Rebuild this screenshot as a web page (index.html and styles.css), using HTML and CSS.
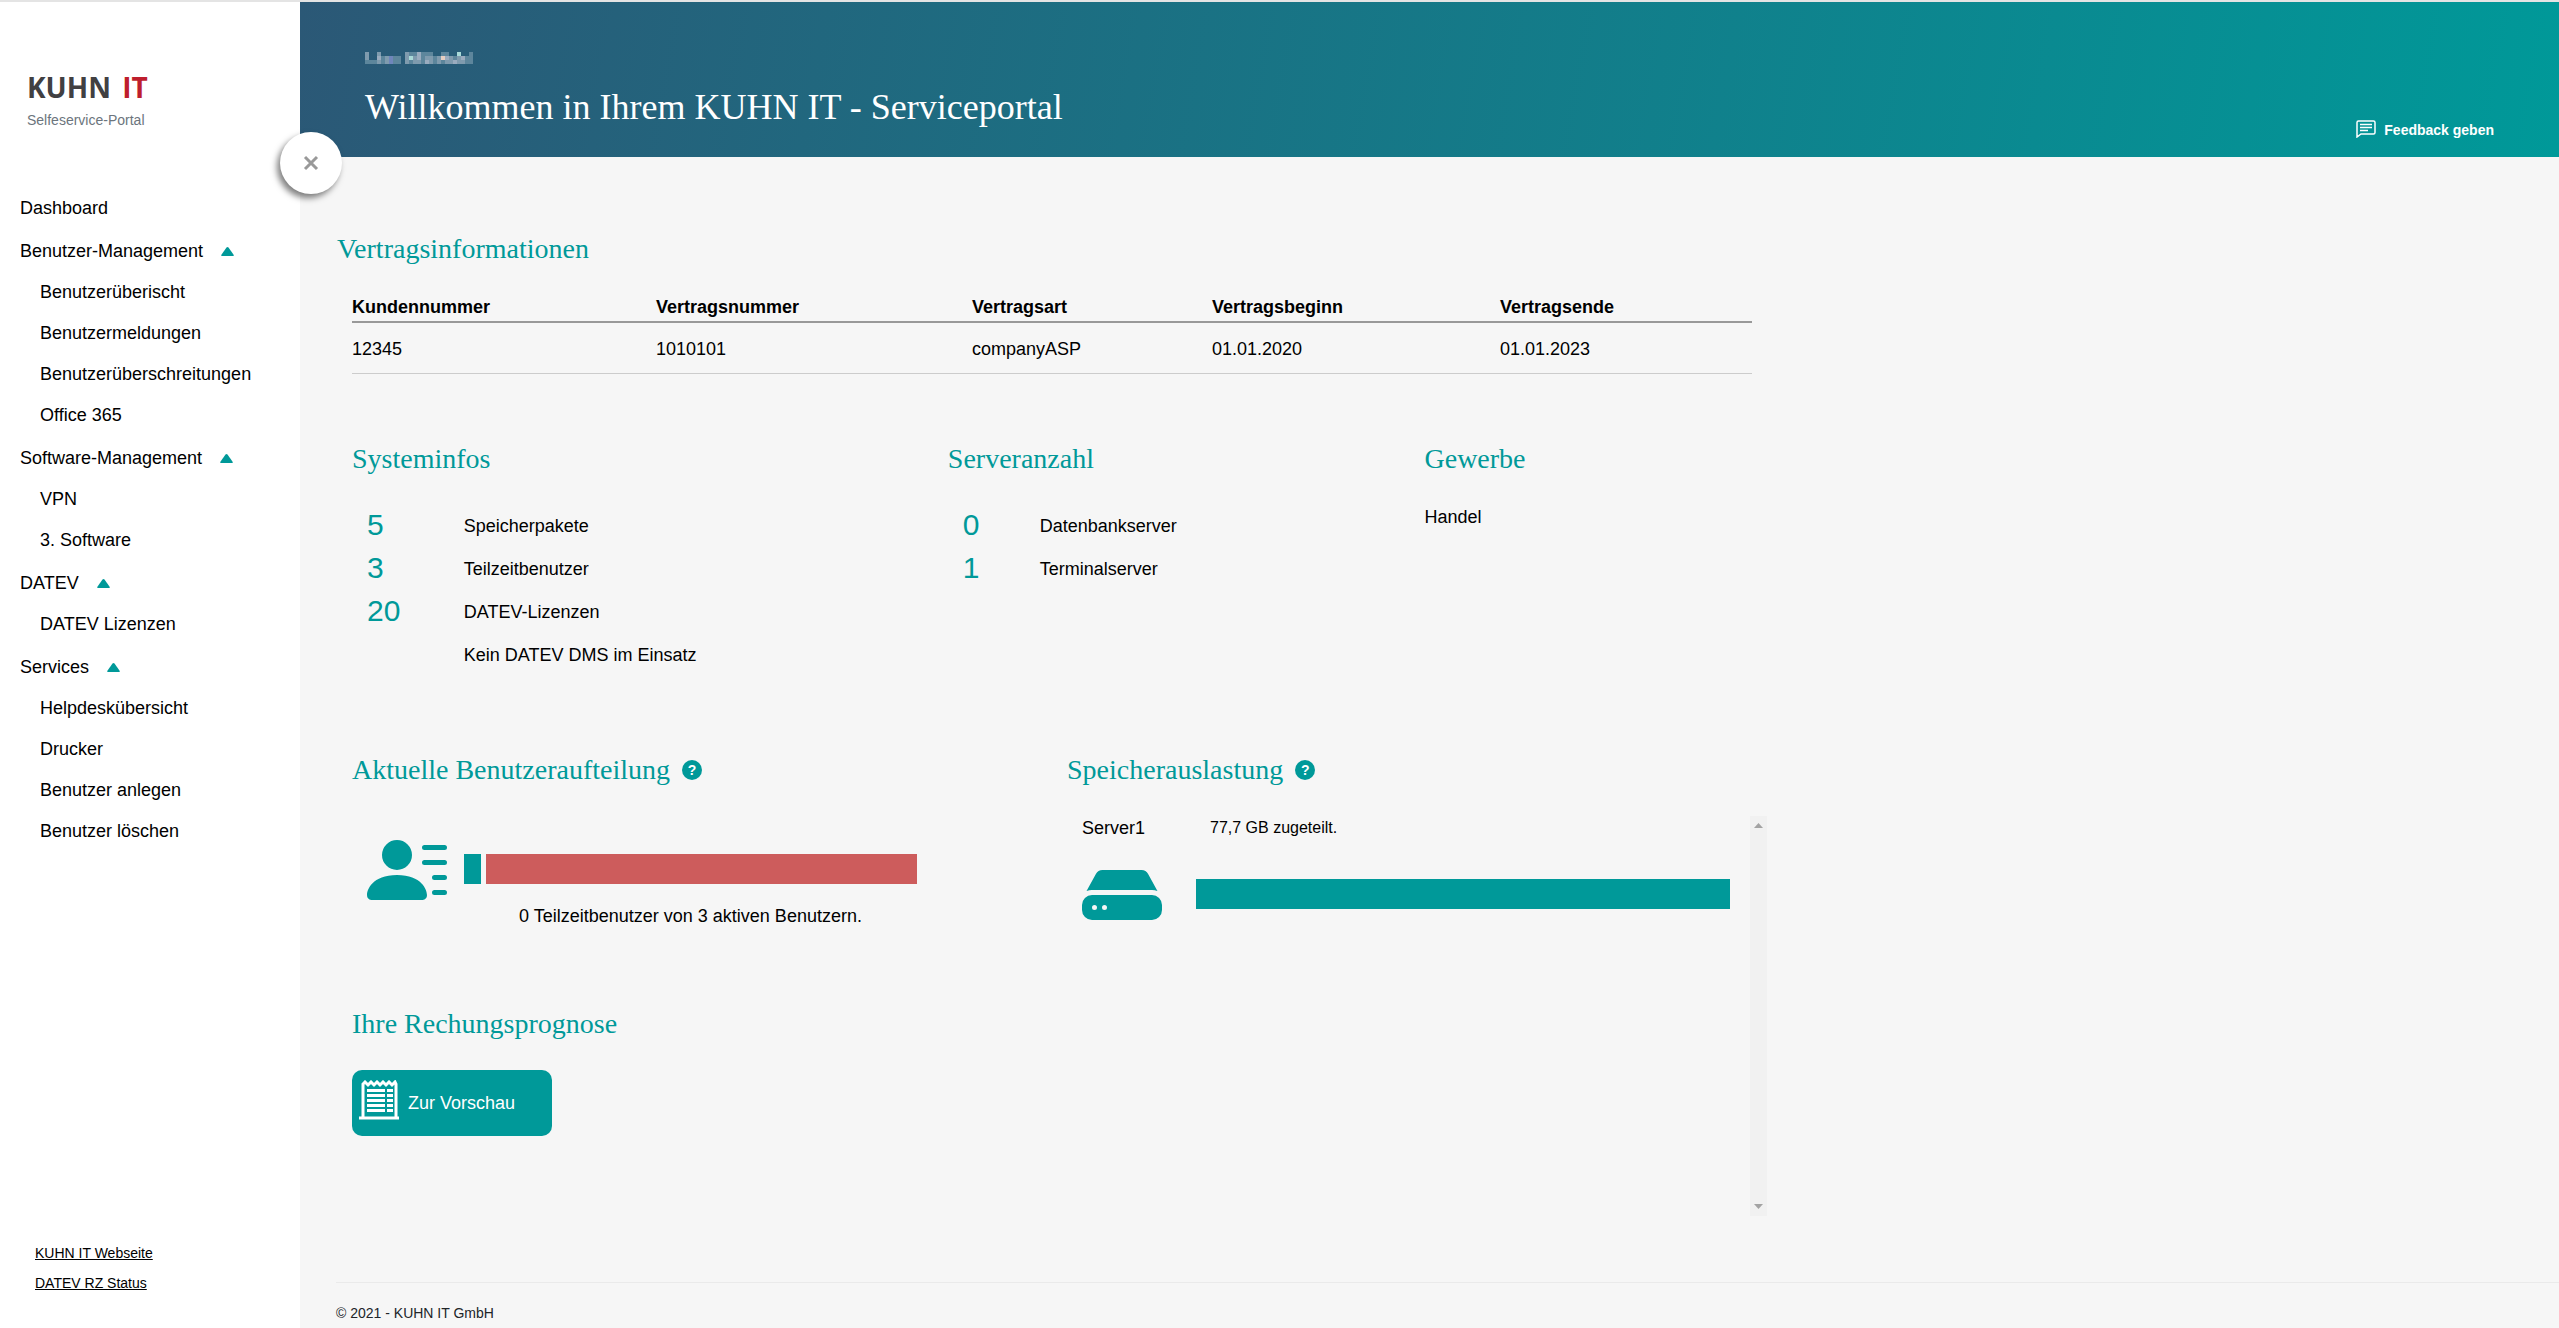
FILE: index.html
```
<!DOCTYPE html>
<html lang="de">
  <head>
    <meta charset="UTF-8" />
    <meta name="viewport" content="width=device-width, initial-scale=1.0" />
    <title>KUHN IT - Serviceportal</title>
    <link rel="stylesheet" href="styles.css">
  </head>
  <body>
    <!-- Seitenleiste -->
    <aside class="sidebar">
      <div class="brand">
        <div class="logo">KUHN <span class="logo-it">IT</span></div>
        <div class="brand-sub">Selfeservice-Portal</div>
      </div>

      <nav class="menu">
        <a class="menu-link" href="#">Dashboard</a>

        <button class="menu-group" type="button">
          Benutzer-Management
          <svg class="caret" viewBox="0 0 13 9"><path d="M1 9h11q1.400 0 .6-1.200L7.500.6q-1-1.200-2 0L.4 7.800Q-.4 9 1 9z" /></svg>
        </button>
        <a class="menu-link menu-sub" href="#">Benutzerüberischt</a>
        <a class="menu-link menu-sub" href="#">Benutzermeldungen</a>
        <a class="menu-link menu-sub" href="#">Benutzerüberschreitungen</a>
        <a class="menu-link menu-sub" href="#">Office 365</a>

        <button class="menu-group" type="button">
          Software-Management
          <svg class="caret" viewBox="0 0 13 9"><path d="M1 9h11q1.400 0 .6-1.200L7.500.6q-1-1.200-2 0L.4 7.800Q-.4 9 1 9z" /></svg>
        </button>
        <a class="menu-link menu-sub" href="#">VPN</a>
        <a class="menu-link menu-sub" href="#">3. Software</a>

        <button class="menu-group" type="button">
          DATEV
          <svg class="caret" viewBox="0 0 13 9"><path d="M1 9h11q1.400 0 .6-1.200L7.500.6q-1-1.200-2 0L.4 7.800Q-.4 9 1 9z" /></svg>
        </button>
        <a class="menu-link menu-sub" href="#">DATEV Lizenzen</a>

        <button class="menu-group" type="button">
          Services
          <svg class="caret" viewBox="0 0 13 9"><path d="M1 9h11q1.400 0 .6-1.200L7.500.6q-1-1.200-2 0L.4 7.800Q-.4 9 1 9z" /></svg>
        </button>
        <a class="menu-link menu-sub" href="#">Helpdeskübersicht</a>
        <a class="menu-link menu-sub" href="#">Drucker</a>
        <a class="menu-link menu-sub" href="#">Benutzer anlegen</a>
        <a class="menu-link menu-sub" href="#">Benutzer löschen</a>
      </nav>

      <div class="sidebar-links">
        <a href="#">KUHN IT Webseite</a>
        <a href="#">DATEV RZ Status</a>
      </div>

      <button class="sidebar-close" type="button" aria-label="Menü schließen">
        <svg width="16" height="16" viewBox="0 0 16 16"><path d="M2 2l12 12M14 2L2 14" /></svg>
      </button>
    </aside>

    <div class="page">
      <header class="header">
        <div>
          <svg class="user-name" viewBox="0 0 27 3" shape-rendering="crispEdges">
            <path fill="#5d869c" d="M0 0h1v3H0zM1 2h2v1H1zM3 0h1v3H3zM4 1h5v2H4zM10 0h7v3h-7zM17 1h10v2H17zM19 0h2v1h-2zM23 0h1v1h-1zM26 0h1v1h-1z" />
            <path fill="#7f9bae" d="M0 0h1v2H0zM3 0h1v3H3zM5 1h1v2H5zM10 0h1v3h-1zM12 1h2v2h-2zM15 1h2v2h-2zM18 1h1v2h-1zM20 1h2v2h-2zM23 1h2v2h-2z" />
            <path fill="#9aacbf" d="M3 1h1v1H3zM13 0h1v2h-1zM15 2h1v1h-1zM20 1h1v1h-1zM22 2h1v1h-1zM24 1h1v1h-1z" />
            <path fill="#6f86bb" d="M6 1h1v2H6z" />
            <path fill="#a9dad8" d="M11 1h1v1h-1zM23 0h1v1h-1z" />
            <path fill="#e6cfc2" d="M19 1h1v1h-1z" />
          </svg>
          <h1 class="title">Willkommen in Ihrem KUHN IT - Serviceportal</h1>
        </div>
        <a class="feedback" href="#">
          <svg width="20" height="18" viewBox="0 0 20 18"><path d="M1 17V2.500Q1 1 2.500 1h15Q19 1 19 2.500v10q0 1.500-1.500 1.500H5zM4 4.500h12M4 7.500h12M4 10.500h8" /></svg>
          Feedback geben
        </a>
      </header>

      <main class="content">
        <h2>Vertragsinformationen</h2>

        <div class="inner">
          <table class="contract">
            <thead>
              <tr>
                <th class="col-customer">Kundennummer</th>
                <th class="col-number">Vertragsnummer</th>
                <th class="col-type">Vertragsart</th>
                <th class="col-start">Vertragsbeginn</th>
                <th>Vertragsende</th>
              </tr>
            </thead>
            <tbody>
              <tr>
                <td>12345</td>
                <td>1010101</td>
                <td>companyASP</td>
                <td>01.01.2020</td>
                <td>01.01.2023</td>
              </tr>
            </tbody>
          </table>

          <div class="infos">
            <section>
              <h2>Systeminfos</h2>
              <ul class="counts">
                <li><span class="count">5</span><span>Speicherpakete</span></li>
                <li><span class="count">3</span><span>Teilzeitbenutzer</span></li>
                <li><span class="count">20</span><span>DATEV-Lizenzen</span></li>
                <li><span class="count"></span><span>Kein DATEV DMS im Einsatz</span></li>
              </ul>
            </section>
            <section>
              <h2>Serveranzahl</h2>
              <ul class="counts">
                <li><span class="count">0</span><span>Datenbankserver</span></li>
                <li><span class="count">1</span><span>Terminalserver</span></li>
              </ul>
            </section>
            <section>
              <h2>Gewerbe</h2>
              <p class="trade">Handel</p>
            </section>
          </div>

          <div class="usage">
            <div>
              <section>
                <h2>
                  Aktuelle Benutzeraufteilung
                  <button class="help" type="button" aria-label="Hilfe zur Benutzeraufteilung">?</button>
                </h2>
                <div class="users">
                  <svg class="icon" viewBox="0 0 16 16">
                    <path d="M6 8a3 3 0 1 0 0-6 3 3 0 0 0 0 6zm-5 6s-1 0-1-1 1-4 6-4 6 3 6 4-1 1-1 1H1zM11 3.500a.5.500 0 0 1 .5-.5h4a.5.500 0 0 1 0 1h-4a.5.500 0 0 1-.5-.5zm.5 2.500a.5.500 0 0 0 0 1h4a.5.500 0 0 0 0-1h-4zm2 3a.5.500 0 0 0 0 1h2a.5.500 0 0 0 0-1h-2zm0 3a.5.500 0 0 0 0 1h2a.5.500 0 0 0 0-1h-2z" />
                  </svg>
                  <div class="users-chart">
                    <div class="bars">
                      <div class="bar bar-part"></div>
                      <div class="bar bar-full"></div>
                    </div>
                    <p class="users-text">0 Teilzeitbenutzer von 3 aktiven Benutzern.</p>
                  </div>
                </div>
              </section>

              <section class="forecast">
                <h2>Ihre Rechungsprognose</h2>
                <button class="preview" type="button">
                  <svg width="40" height="46" viewBox="0 0 40 46">
                    <path class="line" d="M4 37V4l2-2 3 3 3-3 3 3 3-3 3 3 3-3 3 3 3-3 3 3 3-3 1 2v33" />
                    <path class="line" d="M0 38h40" />
                    <path class="line" d="M8 10.500h18M28 10.500h6M8 15.500h18M28 15.500h6M8 20.500h18M28 20.500h6M8 25.500h18M28 25.500h6M8 30.500h18M28 30.500h6" />
                  </svg>
                  Zur Vorschau
                </button>
              </section>
            </div>

            <section>
              <h2>
                Speicherauslastung
                <button class="help" type="button" aria-label="Hilfe zur Speicherauslastung">?</button>
              </h2>
              <div class="storage">
                <div class="server">
                  <p>Server1</p>
                  <svg class="icon" viewBox="0 0 16 16">
                    <path d="M0 10a2 2 0 0 1 2-2h12a2 2 0 0 1 2 2v1a2 2 0 0 1-2 2H2a2 2 0 0 1-2-2v-1zm2.500 1a.5.500 0 1 0 0-1 .5.500 0 0 0 0 1zm2 0a.5.500 0 1 0 0-1 .5.500 0 0 0 0 1zM.91 7.204A2.993 2.993 0 0 1 2 7h12c.384 0 .752.072 1.090.204l-1.867-3.422A1.500 1.500 0 0 0 11.906 3H4.094a1.500 1.500 0 0 0-1.317.782L.91 7.204z" />
                  </svg>
                </div>
                <div class="server-usage">
                  <p class="server-text">77,7 GB zugeteilt.</p>
                  <div class="bar bar-storage"></div>
                </div>
                <div class="scrollbar">
                  <svg width="9" height="5" viewBox="0 0 9 5"><path d="M0 5h9L4.500 0z" /></svg>
                  <svg width="9" height="5" viewBox="0 0 9 5"><path d="M0 0h9L4.500 5z" /></svg>
                </div>
              </div>
            </section>
          </div>
        </div>
      </main>

      <footer class="footer">&copy; 2021 - KUHN IT GmbH</footer>
    </div>
  </body>
</html>
```

FILE: styles.css
```
* {
  box-sizing: border-box;
}
body {
  display: flex;
  min-height: 100vh;
  margin: 0;
  border-top: 2px solid #e4e4e4;
  background: #f6f6f6;
  color: #000;
  font-family: "Liberation Sans", Arial, sans-serif;
  font-size: 18px;
  line-height: 24px;
}
h1,
h2,
p,
ul {
  margin: 0;
  padding: 0;
  font-weight: normal;
}
h2 {
  display: flex;
  align-items: center;
  gap: 12px;
  color: #009999;
  font-family: "Liberation Serif", "Times New Roman", serif;
  font-size: 28px;
  line-height: 32px;
}
a {
  color: inherit;
  text-decoration: none;
}
button {
  border: 0;
  font: inherit;
  cursor: pointer;
}

/* Seitenleiste */
.sidebar {
  position: relative;
  display: flex;
  flex-direction: column;
  flex: 0 0 300px;
  background: #fff;
}
.brand {
  padding: 67px 27px 0;
}
.logo {
  color: #414042;
  font-family: "Open Sans", sans-serif;
  font-size: 28px;
  font-weight: bold;
  line-height: 36px;
}
.logo-it {
  margin-left: 4px;
  color: #be1e2d;
}
.brand-sub {
  margin-top: 5px;
  color: #6c757d;
  font-size: 14px;
  line-height: 20px;
}
.menu {
  display: flex;
  flex-direction: column;
  margin-top: 58px;
  padding-left: 20px;
}
.menu-link,
.menu-group {
  line-height: 41px;
}
.menu-sub {
  padding-left: 20px;
}
.menu-group {
  display: flex;
  align-items: center;
  gap: 18px;
  margin-top: 2px;
  padding: 0;
  background: none;
  color: inherit;
}
.caret {
  width: 13px;
  height: 9px;
  fill: #009999;
}
.sidebar-links {
  display: flex;
  flex-direction: column;
  align-items: flex-start;
  margin-top: auto;
  padding: 0 35px 30px;
  font-size: 14px;
  line-height: 30px;
}
.sidebar-links a {
  text-decoration: underline;
}
.sidebar-close {
  position: absolute;
  top: 130px;
  right: -42px;
  display: flex;
  align-items: center;
  justify-content: center;
  width: 62px;
  height: 62px;
  border-radius: 50%;
  background: #fff;
  box-shadow: -3px 4px 6px rgba(0, 0, 0, 0.5);
}
.sidebar-close svg {
  fill: none;
  stroke: #999;
  stroke-width: 3;
}

/* Kopfbereich */
.page {
  display: flex;
  flex: 1;
  flex-direction: column;
  min-width: 0;
}
.header {
  display: flex;
  align-items: flex-end;
  justify-content: space-between;
  padding: 50px 65px 17px;
  background: linear-gradient(100deg, #2b5876, #009999);
  color: #fff;
}
.user-name {
  display: block;
  width: 108px;
  height: 12px;
}
.title {
  margin: 21px 0 11px;
  font-family: "Liberation Serif", "Times New Roman", serif;
  font-size: 36px;
  line-height: 44px;
}
.feedback {
  display: flex;
  gap: 8px;
  font-size: 14px;
  font-weight: bold;
  line-height: 20px;
}
.feedback svg {
  fill: none;
  stroke: #fff;
  stroke-width: 1.5;
}

/* Inhalt */
.content {
  padding: 76px 37px 0;
}
.inner {
  max-width: 1445px;
  padding-left: 15px;
}
.contract {
  width: calc(100% - 30px);
  margin-top: 30px;
  border-spacing: 0;
  table-layout: fixed;
  text-align: left;
}
.contract th {
  padding: 0 0 2px;
  border-bottom: 2px solid #999;
}
.contract td {
  padding: 14px 0 12px;
  border-bottom: 1px solid #ccc;
}
.col-customer {
  width: 304px;
}
.col-number {
  width: 316px;
}
.col-type {
  width: 240px;
}
.col-start {
  width: 288px;
}
.infos {
  display: grid;
  grid-template-columns: 5fr 4fr 3fr;
  margin-top: 69px;
}
.counts {
  margin-top: 30px;
  padding-left: 15px;
  list-style: none;
  line-height: 43px;
}
.counts li {
  display: grid;
  grid-template-columns: 1fr 5fr;
}
.count {
  color: #009999;
  font-size: 30px;
  line-height: 40px;
}
.trade {
  margin-top: 30px;
}
.usage {
  display: grid;
  grid-template-columns: 1fr 1fr;
  margin-top: 77px;
}
.help {
  width: 20px;
  height: 20px;
  padding: 0;
  border-radius: 50%;
  background: #009999;
  color: #fff;
  font-family: "Liberation Sans", Arial, sans-serif;
  font-size: 14px;
  font-weight: bold;
  line-height: 20px;
}
.icon {
  display: block;
  flex: none;
  width: 80px;
  height: 80px;
  fill: #009999;
}
.bar {
  height: 30px;
  background: #009999;
}

/* Benutzeraufteilung */
.users {
  display: flex;
  gap: 17px;
  margin-top: 44px;
  padding: 0 150px 0 15px;
}
.users-chart {
  flex: 1;
  padding-top: 24px;
}
.bars {
  display: flex;
  gap: 5px;
}
.bar-part {
  width: 17px;
}
.bar-full {
  flex: 1;
  background: #cd5c5c;
}
.users-text {
  margin-top: 20px;
  text-align: center;
}
.forecast {
  margin-top: 80px;
}
.preview {
  display: flex;
  align-items: center;
  gap: 9px;
  width: 200px;
  height: 66px;
  margin-top: 30px;
  padding: 0 7px;
  border-radius: 10px;
  background: #009999;
  color: #fff;
}
.preview .line {
  fill: none;
  stroke: #fff;
  stroke-width: 3;
}

/* Speicherauslastung */
.storage {
  display: flex;
  height: 400px;
  margin: 30px 15px 0 0;
  padding-left: 15px;
}
.server {
  flex: 0 0 114px;
}
.server .icon {
  margin-top: 15px;
}
.server-usage {
  flex: 1;
}
.server-text {
  padding-left: 14px;
  font-size: 16px;
}
.bar-storage {
  margin-top: 39px;
}
.scrollbar {
  display: flex;
  flex-direction: column;
  align-items: center;
  justify-content: space-between;
  width: 17px;
  margin-left: 20px;
  padding: 7px 0;
  background: #f1f1f1;
}
.scrollbar svg {
  fill: #a3a3a3;
}

.footer {
  margin: auto 0 0 36px;
  padding: 20px 0 5px;
  border-top: 1px solid #eaeaea;
  color: #212529;
  font-size: 14px;
  line-height: 20px;
}
```
